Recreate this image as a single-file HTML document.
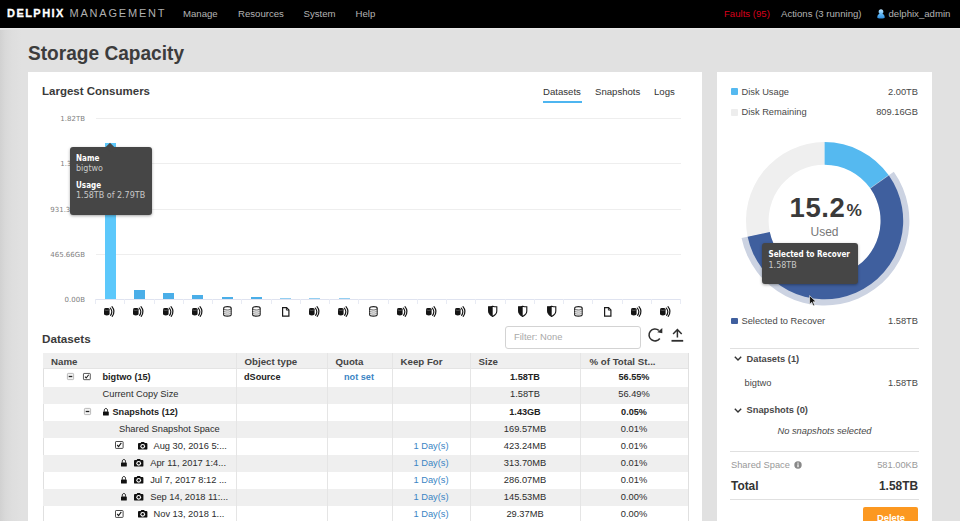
<!DOCTYPE html>
<html lang="en">
<head>
<meta charset="utf-8">
<title>Storage Capacity</title>
<style>
*{box-sizing:border-box;margin:0;padding:0}
html,body{width:960px;height:521px;overflow:hidden}
body{background:#e1e1e1;font-family:"Liberation Sans",sans-serif;color:#333;position:relative}
.abs,.abs *{position:absolute}
.t{position:absolute;white-space:nowrap;line-height:1}
#nav{position:absolute;left:0;top:0;width:960px;height:28px;background:#000}
#nav .t{top:9px;font-size:9.6px;color:#b4b4b4}
#edge{position:absolute;left:0;top:28px;width:22px;height:493px;background:linear-gradient(90deg,#d1d1d1 0,#d9d9d9 25%,#dedede 55%,#e1e1e1 100%)}
#hl{position:absolute;left:0;top:28px;width:960px;height:2px;background:linear-gradient(#ececec,#e1e1e1)}
.card{position:absolute;background:#fff}
.lc{font-family:"DejaVu Sans",sans-serif}
.lcb{font-family:"DejaVu Sans Condensed","DejaVu Sans",sans-serif;font-weight:bold}
.ax{font-family:"DejaVu Sans",sans-serif;font-size:7px;color:#808080;text-align:right;width:60px;left:25px}
.grid{position:absolute;left:96px;width:585px;height:1px;background:#eee}
.bar{position:absolute;width:11px;background:#4aaee8}
.tick{position:absolute;top:299px;width:1px;height:5px;background:#e8ebf4}
.ico{position:absolute;top:306px}
svg{position:absolute;overflow:visible}
.row{position:absolute;left:43px;width:645px;height:17.08px}
.row.g{background:#efefef}
.cell{font-size:9.3px;color:#2c2c2c;top:4px}
.b{font-weight:bold;font-size:9.15px;color:#222}
.c{text-align:center}
.lnk{color:#3a84c4}
.vsep{position:absolute;top:353px;width:1px;height:168px;background:#e5e5e5}
.rt{font-size:9.3px;color:#484848}
.r{text-align:right;right:42px}
.hr{position:absolute;left:729.5px;width:189.5px;height:1px;background:#e0e0e0}
</style>
</head>
<body>
<div id="nav">
  <span class="t" style="left:7px;top:8px;font-size:11px;font-weight:bold;color:#fff;-webkit-text-stroke:.3px #fff;letter-spacing:1.45px">DELPHIX</span>
  <span class="t" style="left:69.5px;top:8px;font-size:11px;color:#b0b0b0;letter-spacing:1.8px">MANAGEMENT</span>
  <span class="t" style="left:183px">Manage</span>
  <span class="t" style="left:238px">Resources</span>
  <span class="t" style="left:303.5px">System</span>
  <span class="t" style="left:355.5px">Help</span>
  <span class="t" style="left:724px;color:#d9001b">Faults (95)</span>
  <span class="t" style="left:781px">Actions (3 running)</span>
  <svg style="left:877px;top:9px" width="8" height="10" viewBox="0 0 8 10"><defs><linearGradient id="ug" x1="0" y1="0" x2="0" y2="1"><stop offset="0" stop-color="#bfe6ff"/><stop offset=".55" stop-color="#5db4f2"/><stop offset="1" stop-color="#2f8ee0"/></linearGradient></defs><path d="M.3 8.4C.3 6.400 1.300 5.300 2.600 4.800C1.900 4.300 1.600 3.600 1.600 2.700C1.600 1.300 2.600.300 4 .3S6.400 1.300 6.400 2.700C6.400 3.600 6.100 4.300 5.400 4.800C6.700 5.300 7.700 6.400 7.700 8.400C7.700 9.200 6.200 9.500 4 9.500S.3 9.200.3 8.400Z" fill="url(#ug)"/></svg>
  <span class="t" style="left:888.5px">delphix_admin</span>
</div>
<div id="edge"></div><div id="hl"></div>
<span class="t" style="left:27.5px;top:42.5px;font-size:20px;font-weight:bold;color:#3c3c3c;transform:scaleX(.955);transform-origin:0 0">Storage Capacity</span>

<!-- LEFT CARD -->
<div class="card" style="left:28px;top:71.6px;width:674px;height:460px"></div>
<span class="t" style="left:42px;top:85.5px;font-size:11.5px;font-weight:bold;color:#3a3a3a">Largest Consumers</span>
<span class="t" style="left:543px;top:87px;font-size:9.6px;color:#333">Datasets</span>
<span class="t" style="left:595px;top:87px;font-size:9.6px;color:#333">Snapshots</span>
<span class="t" style="left:654px;top:87px;font-size:9.6px;color:#333">Logs</span>
<div style="position:absolute;left:543px;top:100.5px;width:38.5px;height:2px;background:#4db5f0"></div>

<!-- chart -->
<div class="grid" style="top:117.6px"></div>
<div class="grid" style="top:163px"></div>
<div class="grid" style="top:209px"></div>
<div class="grid" style="top:254px"></div>
<div class="grid" style="top:299px;background:#dfe3f0"></div>
<span class="t ax" style="top:116.2px">1.82TB</span>
<span class="t ax" style="top:161.2px">1.36TB</span>
<span class="t ax" style="top:206.7px">931.32GB</span>
<span class="t ax" style="top:252px">465.66GB</span>
<span class="t ax" style="top:297px">0.00B</span>
<div class="bar" style="left:105px;top:143px;height:156px;background:#5cc8fb"></div>
<div class="bar" style="left:134px;top:289.5px;height:9.5px"></div>
<div class="bar" style="left:163px;top:292.5px;height:6.5px"></div>
<div class="bar" style="left:192px;top:295px;height:4px"></div>
<div class="bar" style="left:222px;top:297px;height:2px"></div>
<div class="bar" style="left:251px;top:297px;height:2px"></div>
<div class="bar" style="left:280px;top:298px;height:1px;opacity:.6"></div>
<div class="bar" style="left:309px;top:298px;height:1px;opacity:.6"></div>
<div class="bar" style="left:339px;top:298px;height:1px;opacity:.6"></div>

<svg width="0" height="0" style="left:0;top:0">
 <defs>
  <g id="i-ds">
    <path d="M0 3.3C0 2.4 1.2 1.9 2.8 1.9S5.6 2.4 5.6 3.3V8.1C5.6 9 4.4 9.5 2.8 9.5S0 9 0 8.1Z" fill="#151515"/>
    <path d="M.3 3.9Q2.8 5 5.3 3.9" fill="none" stroke="#8a8a8a" stroke-width=".55"/>
    <path d="M6.3 2Q9.2 5.6 6.6 9.3" fill="none" stroke="#151515" stroke-width="1.15" stroke-linecap="round"/>
    <path d="M8 .7Q11.9 5.5 8.2 10.4" fill="none" stroke="#151515" stroke-width="1.15" stroke-linecap="round"/>
  </g>
  <g id="i-db">
    <path d="M.6 2.3C.6 1.2 2.3.6 4.4.6S8.2 1.2 8.2 2.3V8.4C8.2 9.5 6.5 10.1 4.4 10.1S.6 9.5.6 8.4Z" fill="#fff" stroke="#222" stroke-width="1.1"/>
    <path d="M.6 2.3C.6 3.4 2.3 4 4.4 4S8.2 3.4 8.2 2.3" fill="none" stroke="#444" stroke-width=".9"/>
    <path d="M.6 4.4C.6 5.5 2.3 6.1 4.4 6.1S8.2 5.5 8.2 4.4M.6 6.4C.6 7.5 2.3 8.1 4.4 8.1S8.2 7.5 8.2 6.4" fill="none" stroke="#777" stroke-width=".8"/>
  </g>
  <g id="i-file">
    <path d="M.6.6H4.6L6.9 2.9V9.1H.6Z" fill="#fff" stroke="#1a1a1a" stroke-width="1.2"/>
    <path d="M4.4.6V3.1H6.9" fill="none" stroke="#1a1a1a" stroke-width=".9"/>
  </g>
  <g id="i-sh">
    <path d="M.6.8C2.2.8 3.6.6 4.7.2C5.8.6 7.2.8 8.8.8V5C8.8 7.6 6.6 9.4 4.7 10.4C2.800 9.4.6 7.600.6 5Z" fill="#fff" stroke="#151515" stroke-width="1.1"/>
    <path d="M.6.8C2.200.8 3.600.6 4.700.2V10.4C2.800 9.400.600 7.600.600 5Z" fill="#151515"/>
  </g>
  <g id="i-cam">
    <path d="M0 1.9C0 1.4.4 1 .9 1H2.7L3.3.1H6.100L6.700 1H8.500C9 1 9.400 1.400 9.400 1.900V6.700C9.400 7.200 9 7.600 8.500 7.600H.9C.4 7.600 0 7.200 0 6.700Z" fill="#111"/>
    <circle cx="4.7" cy="4.3" r="2.35" fill="#fff"/><circle cx="4.7" cy="4.3" r="1.2" fill="#111"/>
  </g>
  <g id="i-lock">
    <path d="M1.3 3.6V2.4C1.3 1.2 2 .5 2.9.5S4.5 1.2 4.5 2.4V3.6" fill="none" stroke="#111" stroke-width="1"/>
    <rect x="0" y="3.4" width="5.8" height="4.2" rx=".6" fill="#111"/>
  </g>
  <g id="i-chk">
    <rect x=".5" y=".5" width="7.6" height="6.9" rx=".6" fill="#fff" stroke="#4a4a4a" stroke-width="1"/>
    <path d="M2.2 4L3.600 5.600L6.300 1.900" fill="none" stroke="#1a1a1a" stroke-width="1.15"/>
  </g>
  <g id="i-min">
    <rect x=".4" y=".4" width="6.2" height="6.2" rx=".8" fill="#f4f4f4" stroke="#aaa" stroke-width=".8"/>
    <path d="M1.7 3.5H5.3" stroke="#222" stroke-width="1.3"/>
  </g>
  <g id="i-chev"><path d="M.8.8L4 4L7.2.8" fill="none" stroke="#333" stroke-width="1.4"/></g>
 </defs>
</svg>
<div class="tick" style="left:95.1px"></div>
<div class="tick" style="left:124.3px"></div>
<div class="tick" style="left:153.6px"></div>
<div class="tick" style="left:182.8px"></div>
<div class="tick" style="left:212.1px"></div>
<div class="tick" style="left:241.3px"></div>
<div class="tick" style="left:270.6px"></div>
<div class="tick" style="left:299.9px"></div>
<div class="tick" style="left:329.1px"></div>
<div class="tick" style="left:358.4px"></div>
<div class="tick" style="left:387.6px"></div>
<div class="tick" style="left:416.9px"></div>
<div class="tick" style="left:446.1px"></div>
<div class="tick" style="left:475.4px"></div>
<div class="tick" style="left:504.6px"></div>
<div class="tick" style="left:533.9px"></div>
<div class="tick" style="left:563.1px"></div>
<div class="tick" style="left:592.4px"></div>
<div class="tick" style="left:621.6px"></div>
<div class="tick" style="left:650.9px"></div>
<div class="tick" style="left:680.1px"></div>
<svg class="ico" style="left:104.22px;top:306.25px" width="10.6" height="11"><use href="#i-ds"/></svg>
<svg class="ico" style="left:133.47px;top:306.25px" width="10.6" height="11"><use href="#i-ds"/></svg>
<svg class="ico" style="left:162.72px;top:306.25px" width="10.6" height="11"><use href="#i-ds"/></svg>
<svg class="ico" style="left:191.97px;top:306.25px" width="10.6" height="11"><use href="#i-ds"/></svg>
<svg class="ico" style="left:222.82px;top:306.25px" width="8.8" height="11"><use href="#i-db"/></svg>
<svg class="ico" style="left:252.08px;top:306.25px" width="8.8" height="11"><use href="#i-db"/></svg>
<svg class="ico" style="left:282.08px;top:306.9px" width="7.5" height="11"><use href="#i-file"/></svg>
<svg class="ico" style="left:308.98px;top:306.25px" width="10.6" height="11"><use href="#i-ds"/></svg>
<svg class="ico" style="left:338.23px;top:306.25px" width="10.6" height="11"><use href="#i-ds"/></svg>
<svg class="ico" style="left:369.08px;top:306.25px" width="8.8" height="11"><use href="#i-db"/></svg>
<svg class="ico" style="left:396.73px;top:306.25px" width="10.6" height="11"><use href="#i-ds"/></svg>
<svg class="ico" style="left:425.98px;top:306.25px" width="10.6" height="11"><use href="#i-ds"/></svg>
<svg class="ico" style="left:455.23px;top:306.25px" width="10.6" height="11"><use href="#i-ds"/></svg>
<svg class="ico" style="left:488.28px;top:306.25px" width="9.4" height="11"><use href="#i-sh"/></svg>
<svg class="ico" style="left:517.52px;top:306.25px" width="9.4" height="11"><use href="#i-sh"/></svg>
<svg class="ico" style="left:546.77px;top:306.25px" width="9.4" height="11"><use href="#i-sh"/></svg>
<svg class="ico" style="left:573.83px;top:306.25px" width="8.8" height="11"><use href="#i-db"/></svg>
<svg class="ico" style="left:603.83px;top:306.9px" width="7.5" height="11"><use href="#i-file"/></svg>
<svg class="ico" style="left:630.73px;top:306.25px" width="10.6" height="11"><use href="#i-ds"/></svg>
<svg class="ico" style="left:659.98px;top:306.25px" width="10.6" height="11"><use href="#i-ds"/></svg>

<!-- chart tooltip -->
<div style="position:absolute;left:69.5px;top:146.5px;width:82.5px;height:68px;background:#464646;border-radius:3px;box-shadow:0 1px 3px rgba(0,0,0,.35)"></div>
<div style="position:absolute;left:107px;top:143.5px;width:6px;height:6px;background:#464646;transform:rotate(45deg)"></div>
<span class="t lcb" style="left:76px;top:155.2px;font-size:8px;color:#fff">Name</span>
<span class="t lc" style="left:76px;top:165.3px;font-size:8px;color:#c8c8c8">bigtwo</span>
<span class="t lcb" style="left:76px;top:182.4px;font-size:8px;color:#fff">Usage</span>
<span class="t lc" style="left:76px;top:192.3px;font-size:8px;color:#c8c8c8">1.58TB of 2.79TB</span>

<!-- datasets header -->
<span class="t" style="left:42px;top:332.8px;font-size:11.7px;font-weight:bold;color:#3a3a3a">Datasets</span>
<div style="position:absolute;left:504.5px;top:325.5px;width:136px;height:23px;border:1px solid #d3d3d3;border-radius:3px;background:#fff"></div>
<span class="t" style="left:514px;top:331.6px;font-size:9.4px;color:#a8a8a8">Filter: None</span>
<svg style="left:640px;top:322px" width="60" height="30" viewBox="0 0 60 30"><path d="M19.81 16.50A5.95 5.95 0 1 1 18.82 8.44" fill="none" stroke="#2f2f2f" stroke-width="1.55"/><path d="M22.3 6.1V11.2L17.3 10.2Z" fill="#2f2f2f"/><path d="M37.4 15.6V7.600M33.100 12.100L37.400 7.600L41.700 12.100" fill="none" stroke="#2f2f2f" stroke-width="1.5"/><path d="M31.500 18.800H43.200" stroke="#2f2f2f" stroke-width="1.8"/></svg>

<!-- table -->
<div style="position:absolute;left:42.5px;top:352.5px;width:646px;height:180px;border:1px solid #e0e0e0;background:#fff"></div>
<div class="row" style="top:353px;height:16.4px;background:#efefef;border-bottom:1px solid #e4e4e4"></div>
<div class="row g" style="top:386.5px"></div>
<div class="row g" style="top:420.6px"></div>
<div class="row g" style="top:454.8px"></div>
<div class="row g" style="top:489px"></div>
<div class="vsep" style="left:235.5px"></div>
<div class="vsep" style="left:326.5px"></div>
<div class="vsep" style="left:391.5px"></div>
<div class="vsep" style="left:469.5px"></div>
<div class="vsep" style="left:580px"></div>
<span class="t cell b" style="left:51px;top:357.2px;color:#444;font-size:9.7px">Name</span>
<span class="t cell b" style="left:244.5px;top:357.2px;color:#444;font-size:9.7px">Object type</span>
<span class="t cell b" style="left:335.5px;top:357.2px;color:#444;font-size:9.7px">Quota</span>
<span class="t cell b" style="left:400.5px;top:357.2px;color:#444;font-size:9.7px">Keep For</span>
<span class="t cell b" style="left:478.5px;top:357.2px;color:#444;font-size:9.7px">Size</span>
<span class="t cell b" style="left:589.5px;top:357.2px;color:#444;font-size:9.7px">% of Total St...</span>
<svg style="left:67px;top:373.4px" width="7" height="7"><use href="#i-min"/></svg>
<svg style="left:83px;top:373.2px" width="9" height="8"><use href="#i-chk" transform="scale(0.9)"/></svg>
<span class="t cell b" style="left:102.5px;top:373.4px;">bigtwo (15)</span>
<span class="t cell b" style="left:244px;top:373.4px;">dSource</span>
<span class="t cell b lnk c" style="left:299px;width:120px;top:373.4px;">not set</span>
<span class="t cell b c" style="left:465px;width:120px;top:373.4px;">1.58TB</span>
<span class="t cell b c" style="left:574px;width:120px;top:373.4px;">56.55%</span>
<span class="t cell" style="left:102.5px;top:390.47999999999996px;">Current Copy Size</span>
<span class="t cell c" style="left:465px;width:120px;top:390.47999999999996px;">1.58TB</span>
<span class="t cell c" style="left:574px;width:120px;top:390.47999999999996px;">56.49%</span>
<svg style="left:83.5px;top:407.55999999999995px" width="7" height="7"><use href="#i-min"/></svg>
<svg style="left:103px;top:407.55999999999995px" width="6" height="8"><use href="#i-lock"/></svg>
<span class="t cell b" style="left:112.5px;top:407.55999999999995px;">Snapshots (12)</span>
<span class="t cell b c" style="left:465px;width:120px;top:407.55999999999995px;">1.43GB</span>
<span class="t cell b c" style="left:574px;width:120px;top:407.55999999999995px;">0.05%</span>
<span class="t cell" style="left:119px;top:424.64px;">Shared Snapshot Space</span>
<span class="t cell c" style="left:465px;width:120px;top:424.64px;">169.57MB</span>
<span class="t cell c" style="left:574px;width:120px;top:424.64px;">0.01%</span>
<svg style="left:115.3px;top:441.32px" width="9" height="8"><use href="#i-chk"/></svg>
<svg style="left:137.6px;top:441.91999999999996px" width="10" height="8"><use href="#i-cam"/></svg>
<span class="t cell" style="left:153.5px;top:441.71999999999997px;">Aug 30, 2016 5:...</span>
<span class="t cell lnk c" style="left:371px;width:120px;top:441.71999999999997px;">1 Day(s)</span>
<span class="t cell c" style="left:465px;width:120px;top:441.71999999999997px;">423.24MB</span>
<span class="t cell c" style="left:574px;width:120px;top:441.71999999999997px;">0.01%</span>
<svg style="left:121px;top:458.79999999999995px" width="6" height="8"><use href="#i-lock"/></svg>
<svg style="left:134.2px;top:458.99999999999994px" width="10" height="8"><use href="#i-cam"/></svg>
<span class="t cell" style="left:150.2px;top:458.79999999999995px;">Apr 11, 2017 1:4...</span>
<span class="t cell lnk c" style="left:371px;width:120px;top:458.79999999999995px;">1 Day(s)</span>
<span class="t cell c" style="left:465px;width:120px;top:458.79999999999995px;">313.70MB</span>
<span class="t cell c" style="left:574px;width:120px;top:458.79999999999995px;">0.01%</span>
<svg style="left:121px;top:475.88px" width="6" height="8"><use href="#i-lock"/></svg>
<svg style="left:134.2px;top:476.08px" width="10" height="8"><use href="#i-cam"/></svg>
<span class="t cell" style="left:150.2px;top:475.88px;">Jul 7, 2017 8:12 ...</span>
<span class="t cell lnk c" style="left:371px;width:120px;top:475.88px;">1 Day(s)</span>
<span class="t cell c" style="left:465px;width:120px;top:475.88px;">286.07MB</span>
<span class="t cell c" style="left:574px;width:120px;top:475.88px;">0.01%</span>
<svg style="left:121px;top:492.96px" width="6" height="8"><use href="#i-lock"/></svg>
<svg style="left:134.2px;top:493.15999999999997px" width="10" height="8"><use href="#i-cam"/></svg>
<span class="t cell" style="left:150.2px;top:492.96px;">Sep 14, 2018 11:...</span>
<span class="t cell lnk c" style="left:371px;width:120px;top:492.96px;">1 Day(s)</span>
<span class="t cell c" style="left:465px;width:120px;top:492.96px;">145.53MB</span>
<span class="t cell c" style="left:574px;width:120px;top:492.96px;">0.00%</span>
<svg style="left:115.3px;top:509.64px" width="9" height="8"><use href="#i-chk"/></svg>
<svg style="left:137.6px;top:510.23999999999995px" width="10" height="8"><use href="#i-cam"/></svg>
<span class="t cell" style="left:153.5px;top:510.03999999999996px;">Nov 13, 2018 1...</span>
<span class="t cell lnk c" style="left:371px;width:120px;top:510.03999999999996px;">1 Day(s)</span>
<span class="t cell c" style="left:465px;width:120px;top:510.03999999999996px;">29.37MB</span>
<span class="t cell c" style="left:574px;width:120px;top:510.03999999999996px;">0.00%</span>

<!-- RIGHT CARD -->
<div class="card" style="left:717px;top:71.6px;width:215px;height:460px"></div>
<div style="position:absolute;left:731px;top:88.3px;width:6.5px;height:6.5px;border-radius:1px;background:#55b9f0"></div>
<span class="t rt" style="left:741.5px;top:87.7px">Disk Usage</span>
<span class="t rt r" style="top:87.7px">2.00TB</span>
<div style="position:absolute;left:731px;top:109px;width:6.5px;height:6.5px;border-radius:1px;background:#ededed"></div>
<span class="t rt" style="left:741.5px;top:108px">Disk Remaining</span>
<span class="t rt r" style="top:108px">809.16GB</span>
<svg style="left:0;top:0" width="960" height="521">
<path d="M893.81 171.70A84.8 84.8 0 1 1 741.56 237.90L769.76 232.06A56 56 0 1 0 870.30 188.34Z" fill="#ccd3e2"/>
<path d="M747.63 236.64A78.6 78.6 0 0 1 824.60 142.10L824.60 164.70A56 56 0 0 0 769.76 232.06Z" fill="#efefef"/>
<path d="M824.60 142.10A78.6 78.6 0 0 1 888.75 175.28L870.30 188.34A56 56 0 0 0 824.60 164.70Z" fill="#55b9f0"/>
<path d="M888.75 175.28A78.6 78.6 0 1 1 747.63 236.64L769.76 232.06A56 56 0 1 0 870.30 188.34Z" fill="#3f5f9e"/>
<path d="M870.30 188.34L888.75 175.28" stroke="#fff" stroke-width=".6" opacity=".6"/>
</svg>
<span class="t" style="left:789.5px;top:193.5px;font-size:27.5px;font-weight:bold;color:#3a3a3a;letter-spacing:.6px">15.2</span>
<span class="t" style="left:846.5px;top:202px;font-size:17.3px;font-weight:bold;color:#3a3a3a">%</span>
<span class="t" style="left:810.5px;top:225.5px;font-size:12px;color:#777">Used</span>
<!-- donut tooltip -->
<div style="position:absolute;left:761.5px;top:242.5px;width:96px;height:41px;background:#464646;border-radius:3px;box-shadow:0 1px 3px rgba(0,0,0,.35)"></div>
<span class="t lcb" style="left:768.5px;top:251.2px;font-size:8px;color:#fff">Selected to Recover</span>
<span class="t lc" style="left:768.5px;top:261.8px;font-size:8px;color:#c8c8c8">1.58TB</span>
<svg style="left:808.5px;top:294.5px" width="8" height="12" viewBox="0 0 8 12"><path d="M.6.6V9.2L2.7 7.3L4.2 10.8L5.6 10.2L4.1 6.8H7Z" fill="#111" stroke="#fff" stroke-width=".6"/></svg>
<div style="position:absolute;left:731px;top:317.7px;width:6.5px;height:6.5px;border-radius:1px;background:#3f5f9e"></div>
<span class="t rt" style="left:741.5px;top:316.5px">Selected to Recover</span>
<span class="t rt r" style="top:316.5px">1.58TB</span>
<div class="hr" style="top:348px"></div>
<svg style="left:734px;top:356px" width="8" height="5"><use href="#i-chev"/></svg>
<span class="t rt b" style="left:746.5px;top:354.5px">Datasets (1)</span>
<span class="t rt" style="left:744.5px;top:378.5px">bigtwo</span>
<span class="t rt r" style="top:378.5px">1.58TB</span>
<svg style="left:734px;top:407.5px" width="8" height="5"><use href="#i-chev"/></svg>
<span class="t rt b" style="left:746.5px;top:406px">Snapshots (0)</span>
<span class="t rt c" style="left:731px;width:187px;top:426.5px;font-style:italic">No snapshots selected</span>
<div class="hr" style="top:451px"></div>
<span class="t rt" style="left:731px;top:461.1px;color:#999">Shared Space</span>
<svg style="left:793.5px;top:461px" width="8" height="8" viewBox="0 0 8 8"><circle cx="4" cy="4" r="3.7" fill="#888"/><rect x="3.4" y="3.3" width="1.2" height="2.9" fill="#fff"/><rect x="3.4" y="1.6" width="1.2" height="1.1" fill="#fff"/></svg>
<span class="t rt r" style="top:461.1px;color:#999">581.00KB</span>
<span class="t" style="left:731px;top:480.8px;font-size:11.9px;font-weight:bold;color:#333">Total</span>
<span class="t r" style="top:480.8px;font-size:11.9px;font-weight:bold;color:#333">1.58TB</span>
<div class="hr" style="top:499px"></div>
<div style="position:absolute;left:863px;top:507px;width:55px;height:24px;background:#fc9820;border-radius:2px"></div>
<span class="t" style="left:877px;top:513.5px;font-size:9.3px;font-weight:bold;color:#fff">Delete</span>
</body>
</html>
